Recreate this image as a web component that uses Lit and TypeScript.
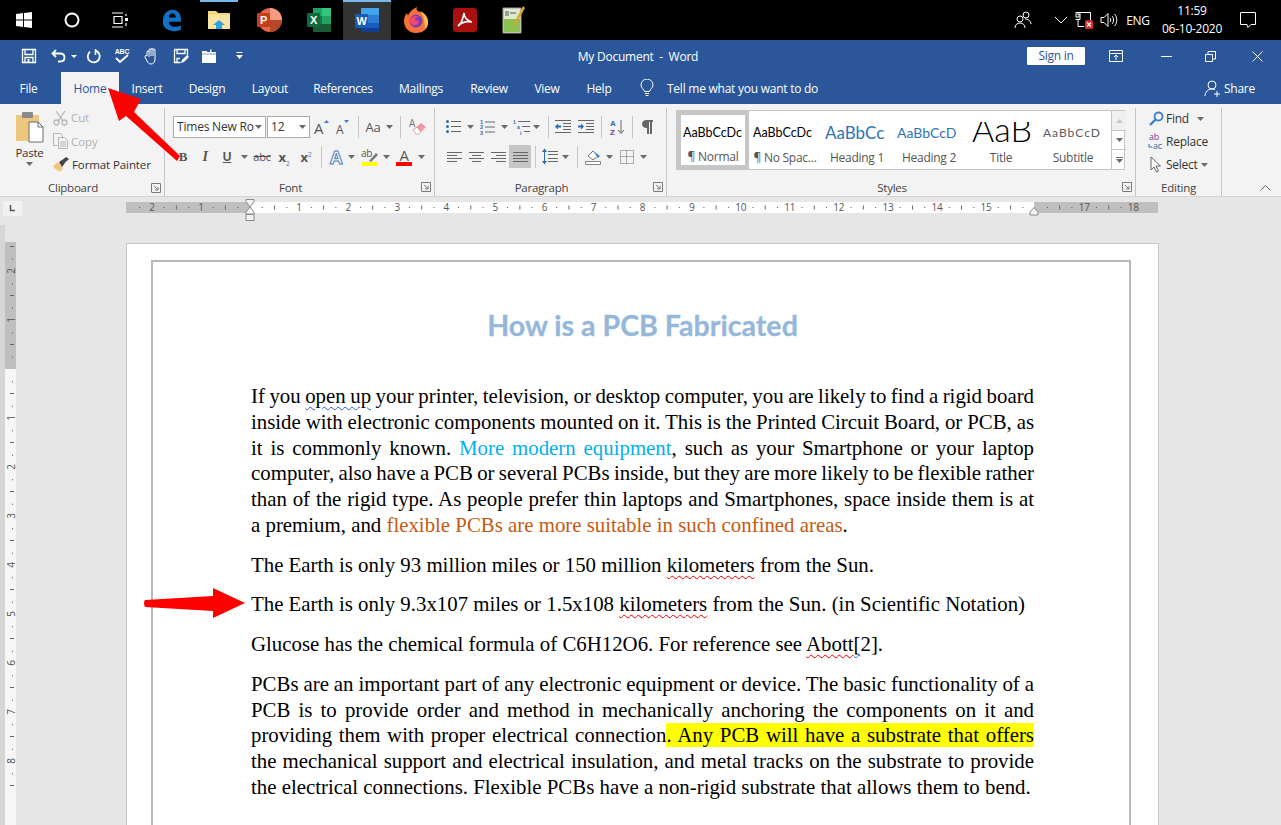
import { LitElement, html, css, svg } from "lit";
import { customElement } from "lit/decorators.js";

const arrow = html`<svg width="7" height="4" viewBox="0 0 7 4"><path d="M0 0h7L3.5 4z" fill="#6a6a6a"/></svg>`;
const launcher = html`<svg width="10" height="10" viewBox="0 0 10 10" fill="none" stroke="#7a7a7a"><path d="M.5 9V.5H9.5V9.5H.5"/><path d="M3 3l4 4M7 4v3H4"/></svg>`;

// taskbar icons
const tb = {
  start: html`<svg width="18" height="18" viewBox="0 0 18 18" fill="#fff"><path d="M1 3l7-1v6.500H1zM9 2l8-1v7.500H9zM1 9.500h7V16l-7-1zM9 9.500h8V17l-8-1z"/></svg>`,
  cortana: html`<svg width="18" height="18" viewBox="0 0 18 18" fill="none" stroke="#fff" stroke-width="2"><circle cx="9" cy="9" r="6.500"/></svg>`,
  task: html`<svg width="18" height="18" viewBox="0 0 18 18" fill="none" stroke="#fff" stroke-width="1.200"><path d="M1 2h11M3 5.500h8v7H3zM1 16h11"/><path d="M15 3v2M15 12v3"/><rect x="14" y="7" width="3" height="3" fill="#fff" stroke="none"/></svg>`,
  edge: html`<svg width="21" height="24" viewBox="0 0 24 28"><path d="M2 15C2 6 8 2 13 2c6 0 10 4 10 11v3H9c0 4 3 6 7 6 3 0 5-1 7-2v5c-2 1-5 2-8 2C7 27 1 22 2 15zM9 11h8c0-3-2-5-4-5-2 0-4 2-4 5z" fill="#0f72c6"/></svg>`,
  folder: html`<svg width="24" height="24" viewBox="0 0 24 24"><path d="M1 3h8l2 2h12v16H1z" fill="#f3d57f"/><path d="M1 7h22v14H1z" fill="#f7e3a3"/><path d="M6 17l6-5 6 5h-3v4H9v-4z" fill="#2ba5e0"/></svg>`,
  ppt: html`<svg width="26" height="26" viewBox="0 0 26 26"><circle cx="14" cy="13" r="12" fill="#e0694b"/><path d="M14 13V1a12 12 0 0 1 12 12z" fill="#f29b7f"/><path d="M14 13h12a12 12 0 0 1-12 12z" fill="#b7472a"/><rect x="1" y="6" width="13" height="14" rx="1" fill="#c43e1c"/><text x="7.500" y="17" font-size="11" font-weight="700" fill="#fff" text-anchor="middle" font-family="Liberation Sans">P</text></svg>`,
  excel: html`<svg width="24" height="26" viewBox="0 0 24 26"><path d="M6 1h18v24H6z" fill="#21a366"/><path d="M15 1h9v8h-9z" fill="#33c481"/><path d="M6 17h18v8H6z" fill="#185c37"/><path d="M6 9h9v8H6z" fill="#107c41"/><rect x="0" y="6" width="13" height="14" rx="1" fill="#0f6b39"/><text x="6.500" y="17" font-size="11" font-weight="700" fill="#fff" text-anchor="middle" font-family="Liberation Sans">X</text></svg>`,
  word: html`<svg width="24" height="26" viewBox="0 0 24 26"><path d="M6 1h18v7H6z" fill="#41a5ee"/><path d="M6 8h18v8H6z" fill="#2b7cd3"/><path d="M6 16h18v5H6z" fill="#185abd"/><path d="M6 21h18v4H6z" fill="#103f91"/><rect x="0" y="7" width="13" height="14" rx="1" fill="#185abd"/><text x="6.500" y="18" font-size="11" font-weight="700" fill="#fff" text-anchor="middle" font-family="Liberation Sans">W</text></svg>`,
  firefox: html`<svg width="26" height="28" viewBox="0 0 26 28"><path d="M13 27C5 27 1 21 1 15c0-3 1-6 3-8l1 3c1-4 5-7 9-9-1 3 0 4 3 5 4 2 8 5 8 11 0 6-5 10-12 10z" fill="#f7713a"/><path d="M17 5c4 2 8 5 8 11 0 3-1 5-3 7 0-6-1-13-5-18z" fill="#ffc73b"/><circle cx="13" cy="15" r="6.500" fill="#7a3bbd"/><path d="M7 13c2-3 6-4 9-2-3 0-4 1-4 3l4 1c0 3-3 5-6 4-2-1-4-3-3-6z" fill="#f04a6c"/></svg>`,
  acrobat: html`<svg width="24" height="24" viewBox="0 0 24 24"><rect width="24" height="24" rx="3" fill="#a80f0f"/><path d="M5 18c3-2 5-7 6-13 0 4 3 8 8 9-5-1-10 0-14 4z" fill="none" stroke="#fff" stroke-width="1.600"/></svg>`,
  notepad: html`<svg width="24" height="30" viewBox="0 0 24 30"><path d="M2 3h18v25H2z" fill="#dfe8d0" stroke="#9aa08f"/><path d="M3 14h16v13H3z" fill="#8cc152"/><path d="M5 6v5M7 6v5M9 8h6" stroke="#555"/><path d="M22 1L12 20l2 1L24 3z" fill="#d9a62e"/></svg>`,
  people: html`<svg width="20" height="20" viewBox="0 0 20 20" fill="none" stroke="#fff"><circle cx="7" cy="9" r="3"/><path d="M2 18c0-3 2-5 5-5s5 2 5 5"/><circle cx="13" cy="5" r="3"/><path d="M12 9c3 0 6 2 6 5"/></svg>`,
  chev: html`<svg width="14" height="8" viewBox="0 0 14 8" fill="none" stroke="#fff"><path d="M1 1l6 6 6-6"/></svg>`,
  net: html`<svg width="18" height="18" viewBox="0 0 18 18"><path d="M.5 1.500h15v11M5 1.500v7M.5 8.500H5M3 8.500v7h6" fill="none" stroke="#fff"/><rect x="1" y="3" width="3" height="3" fill="none" stroke="#fff"/><rect x="10" y="9" width="8" height="9" rx="1.500" fill="#e0262b"/><path d="M12 11.500l4 4M16 11.500l-4 4" stroke="#fff" stroke-width="1.300"/></svg>`,
  speaker: html`<svg width="18" height="16" viewBox="0 0 18 16" fill="none" stroke="#fff"><path d="M1 5.500h3l4-4v13l-4-4H1z"/><path d="M10 6c1 1 1 3 0 4M12 4c2 2 2 6 0 8M14.500 2c3 3 3 9 0 12"/></svg>`,
  notif: html`<svg width="18" height="18" viewBox="0 0 18 18" fill="none" stroke="#fff"><path d="M1.500 1.500h15v12h-4.500l-3 3-1-3h-6.500z"/></svg>`,
};

// title bar icons
const qat = {
  save: html`<svg width="16" height="16" viewBox="0 0 16 16" fill="none" stroke="#fff" stroke-width="1.300"><path d="M1.500 1.500h13v13h-13z"/><path d="M4 1.500v5h8v-5M4 14.500v-5h8v5"/><path d="M6.500 11h2v3h-2z" fill="#fff" stroke="none"/></svg>`,
  undo: html`<svg width="16" height="16" viewBox="0 0 16 16" fill="none" stroke="#fff" stroke-width="1.800"><path d="M5 2L1.500 5.500 5 9M2 5.500h7c6 0 6 8 0 8H7"/></svg>`,
  redo: html`<svg width="16" height="16" viewBox="0 0 16 16" fill="none" stroke="#fff" stroke-width="1.800"><path d="M9 2.500a6 6 0 1 1-5 1.200"/><path d="M9.500 1v6" stroke-width="1.500"/></svg>`,
  spell: html`<svg width="18" height="18" viewBox="0 0 18 18"><text x="9" y="6.500" font-size="7" font-weight="700" fill="#fff" text-anchor="middle" font-family="Liberation Sans">ABC</text><path d="M3 11l4 4 8-7" fill="none" stroke="#fff" stroke-width="1.800"/></svg>`,
  hand: html`<svg width="16" height="18" viewBox="0 0 16 18" fill="none" stroke="#fff"><path d="M3 9V5c0-1.500 2-1.500 2 0V3c0-1.500 2-1.500 2 0v-.5c0-1.500 2-1.500 2 0V3c0-1.500 2-1.500 2 0v9c0 3-1.500 5-4 5-2 0-3-1-4-3L1 10c-.5-1.500 1-2 2-1z"/><path d="M5 5v5M7 3v6M9 3v6"/></svg>`,
  saveas: html`<svg width="16" height="16" viewBox="0 0 16 16" fill="none" stroke="#fff" stroke-width="1.300"><path d="M1.500 1.500h13v6M1.500 1.500v13h6"/><path d="M4 1.500v4h8v-4M4 14.500v-4h3"/><path d="M8 15l1-3 5-5 2 2-5 5z" fill="#fff" stroke="none"/></svg>`,
  open: html`<svg width="16" height="16" viewBox="0 0 16 16"><path d="M1 3h5v1h3V1.500h1.500V4H15v11H1z" fill="#fff"/><path d="M1 6h14" stroke="#2b579a" stroke-width=".6"/></svg>`,
  custom: html`<svg width="7" height="8" viewBox="0 0 7 8" fill="#fff"><path d="M.5 0h6v1h-6zM0 3h7L3.500 7z"/></svg>`,
  ribbon: html`<svg width="14" height="12" viewBox="0 0 14 12" fill="none" stroke="#fff"><path d="M.5.500h13v11H.5zM.5 3.500h13"/><path d="M7 10V5M5 7l2-2 2 2"/></svg>`,
  min: html`<svg width="11" height="1"><path d="M0 .5h11" stroke="#fff"/></svg>`,
  max: html`<svg width="11" height="11" viewBox="0 0 11 11" fill="none" stroke="#fff"><path d="M.5 3.500h7v7h-7zM3 3.500V.5h7.500V8H8"/></svg>`,
  close: html`<svg width="11" height="11" viewBox="0 0 11 11" fill="none" stroke="#fff"><path d="M.5.5l10 10M10.500.5l-10 10"/></svg>`,
  bulb: html`<svg width="14" height="18" viewBox="0 0 14 18" fill="none" stroke="#fff"><path d="M4.500 12.500C4 10 1 9 1 6a6 6 0 0 1 12 0c0 3-3 4-3.500 6.500z"/><path d="M5 14.500h4M5.500 16.500h3"/></svg>`,
  share: html`<svg width="17" height="17" viewBox="0 0 17 17" fill="none" stroke="#fff"><circle cx="8" cy="5" r="4"/><path d="M1 16c0-4 3-7 7-7 1 0 2 .2 3 .6M13 11v6M10 14h6"/></svg>`,
};

// ribbon icons
const rb = {
  paste: html`<svg width="30" height="32" viewBox="0 0 30 32"><rect x="1" y="4" width="23" height="26" rx="1" fill="#eec77f"/><rect x="7" y="1" width="11" height="6" rx="1" fill="#8a8a8a"/><path d="M14 11h9l5 5v15H14z" fill="#fff" stroke="#6a6a6a"/><path d="M23 11v5h5" fill="none" stroke="#6a6a6a"/></svg>`,
  cut: html`<svg width="15" height="16" viewBox="0 0 15 16" fill="none" stroke="#b5b5b5" stroke-width="1.300"><circle cx="3.500" cy="12.500" r="2.500"/><circle cx="11.500" cy="12.500" r="2.500"/><path d="M3 1l7 10M12 1L5 11"/></svg>`,
  copy: html`<svg width="15" height="16" viewBox="0 0 15 16" fill="none" stroke="#b5b5b5"><path d="M.5.500h7l2 2v3M.5.500v12h4"/><path d="M5.500 4.500h6l3 3v8h-9z"/><path d="M7 9h6M7 11h6M7 13h6"/></svg>`,
  painter: html`<svg width="16" height="15" viewBox="0 0 16 15"><path d="M0 9l5-4 5 6-3 4-2-2-1 1-1-2-1 0z" fill="#eec77f"/><path d="M6 5l6-4 2 2-5 7z" fill="#444"/><path d="M11 2l2-2 3 2-2 2z" fill="#444"/></svg>`,
  grow: html`<svg width="18" height="16" viewBox="0 0 18 16"><text x="0" y="15" font-size="15" fill="#555" font-family="Open Sans">A</text><path d="M10 4l2.500-3L15 4z" fill="#4a7ebb"/></svg>`,
  shrink: html`<svg width="16" height="16" viewBox="0 0 16 16"><text x="0" y="15" font-size="12" fill="#555" font-family="Open Sans">A</text><path d="M8 1h5l-2.500 3z" fill="#4a7ebb"/></svg>`,
  eraser: html`<svg width="18" height="18" viewBox="0 0 18 18"><text x="0" y="9" font-size="10" fill="#777" font-family="Open Sans">A</text><path d="M4 12l8-7 5 4-7 7H7z" fill="#ee9aa0"/><path d="M4 12l3 4h3l2-2-4-5z" fill="#fff" stroke="#c77" stroke-width=".6"/></svg>`,
  effects: html`<svg width="18" height="16" viewBox="0 0 18 16"><text x="9" y="14.500" font-size="18" font-weight="700" text-anchor="middle" fill="#fff" stroke="#4a7ebb" stroke-width="1" font-family="Open Sans">A</text></svg>`,
  highlight: html`<svg width="18" height="18" viewBox="0 0 18 18"><text x="0" y="9" font-size="10" fill="#555" font-family="Open Sans">ab</text><path d="M8 13l7-8 2 2-7 7z" fill="#777"/><rect x="1" y="14" width="16" height="4" fill="#ff0"/></svg>`,
  fontcolor: html`<svg width="18" height="18" viewBox="0 0 18 18"><text x="9" y="13" font-size="15" text-anchor="middle" fill="#555" font-family="Open Sans">A</text><rect x="1" y="14" width="16" height="4" fill="#f00"/></svg>`,
  bullets: html`<svg width="15" height="15" viewBox="0 0 15 15"><path d="M5 2.500h10M5 7.500h10M5 12.500h10" stroke="#666"/><g fill="#2b6cb0"><circle cx="1.500" cy="2.500" r="1.500"/><circle cx="1.500" cy="7.500" r="1.500"/><circle cx="1.500" cy="12.500" r="1.500"/></g></svg>`,
  numbers: html`<svg width="15" height="16" viewBox="0 0 15 16"><path d="M5 3h10M5 8h10M5 13h10" stroke="#666"/><g font-size="5.500" fill="#2b6cb0" font-family="Liberation Sans" font-weight="700"><text x="0" y="5">1</text><text x="0" y="10">2</text><text x="0" y="15.500">3</text></g></svg>`,
  multi: html`<svg width="17" height="16" viewBox="0 0 17 16"><path d="M5 2.500h12M9 7.500h8M11 12.500h6" stroke="#666"/><g font-size="5" fill="#2b6cb0" font-family="Liberation Sans" font-weight="700"><text x="0" y="5">1</text><text x="4" y="10">a</text><text x="7" y="15.500">i</text></g></svg>`,
  outdent: html`<svg width="16" height="13" viewBox="0 0 16 13"><path d="M0 .5h16M8 3.500h8M8 6.500h8M8 9.500h8M0 12.500h16" stroke="#666"/><path d="M0 6.500l3-3v2h3v2H3v2z" fill="#2b6cb0"/></svg>`,
  indent: html`<svg width="16" height="13" viewBox="0 0 16 13"><path d="M0 .5h16M8 3.500h8M8 6.500h8M8 9.500h8M0 12.500h16" stroke="#666"/><path d="M6 6.500l-3-3v2H0v2h3v2z" fill="#2b6cb0"/></svg>`,
  sort: html`<svg width="15" height="16" viewBox="0 0 15 16"><text x="0" y="7" font-size="8" font-weight="700" fill="#2b6cb0" font-family="Liberation Sans">A</text><text x="0" y="15.500" font-size="8" font-weight="700" fill="#7c3aa5" font-family="Liberation Sans">Z</text><path d="M11 1v13M8 11l3 3.500 3-3.500" fill="none" stroke="#666"/></svg>`,
  pilcrow: html`<svg width="11" height="14" viewBox="0 0 11 14"><path d="M4.500 0H11v2h-1v12H8V2H7v12H5V8C1.500 8 0 6 0 4s1.500-4 4.500-4z" fill="#666"/></svg>`,
  spacing: html`<svg width="16" height="17" viewBox="0 0 16 17"><path d="M6 3.500h10M6 6.500h10M6 10.500h10M6 13.500h10" stroke="#666"/><path d="M2.500 2v13" stroke="#2b6cb0"/><path d="M0 4l2.500-3.500L5 4zM0 13l2.500 3.500L5 13z" fill="#2b6cb0"/></svg>`,
  shade: html`<svg width="17" height="16" viewBox="0 0 17 16"><path d="M3 7l5-5 5 5-5 4z" fill="#fff" stroke="#777"/><path d="M8 2l7 5-2 2" fill="#4a7ebb"/><path d="M.5 12.500h15v3H.5z" fill="#fff" stroke="#888"/></svg>`,
  borders: html`<svg width="14" height="14" viewBox="0 0 14 14" fill="none" stroke="#666" stroke-dasharray="1 1"><path d="M.5.500h13v13H.5zM.5 6.500h13M6.500 .5v13"/></svg>`,
  find: html`<svg width="15" height="15" viewBox="0 0 15 15" fill="none" stroke="#3c7fc4" stroke-width="1.800"><circle cx="9.500" cy="5.500" r="4"/><path d="M6.500 8.500L1 14" stroke-width="2.400"/></svg>`,
  replace: html`<svg width="17" height="17" viewBox="0 0 17 17" font-family="Open Sans" font-size="9"><text x="1" y="7" fill="#7c3aa5">ab</text><text x="5" y="16" fill="#2b6cb0">ac</text><path d="M1 11v3h3" fill="none" stroke="#2b6cb0"/></svg>`,
  select: html`<svg width="12" height="17" viewBox="0 0 12 17"><path d="M1 1v13l3-3 2.500 5 2-1L6 10h4.500z" fill="#fff" stroke="#666"/></svg>`,
};

// alignment buttons: four lines 3px apart, x/w for the short ones
function alignLines(x: number, w: number) {
  return html`<svg width="15" height="10" viewBox="0 0 15 10"><path d="M0 .5h15M${x} 3.500h${w}M0 6.500h15M${x} 9.500h${w}" stroke="#666"/></svg>`;
}

// horizontal ruler, 49 px per cm counted from the left margin
function hRuler() {
  const x0 = 250;
  const cm = 49.07;
  const marks = [];
  for (let i = -10; i <= 72; i++) {
    const x = x0 + (i * cm) / 4;
    if (x < 128 || x > 1156) continue;
    const n = i / 4;
    if (Number.isInteger(n)) {
      if (n === 0 || n === 16) continue;
      marks.push(svg`<text x=${x} y="12" text-anchor="middle">${Math.abs(n)}</text>`);
    } else if (i % 2 === 0) {
      marks.push(svg`<path d="M${x} 6.500v4" stroke="#666"/>`);
    } else {
      marks.push(svg`<rect x=${x - 0.5} y="8" width="1" height="1" fill="#555"/>`);
    }
  }
  return html`<svg class="hruler" width="1281" height="26" viewBox="0 0 1281 26" font-family="Open Sans" font-size="10" fill="#555">
    <rect x="126" y="3" width="1032" height="11" fill="#bfbfbf"/>
    <rect x="250" y="3" width="784" height="11" fill="#fff"/>
    ${marks}
    <rect x="3" y="2" width="19" height="15" fill="#f1f1f1"/>
    <path d="M10.500 6v5.500H15" fill="none" stroke="#555" stroke-width="1.500"/>
    <path d="M246 .5h8v2l-4 5.500-4-5.500z" fill="#f3f3f3" stroke="#8a8a8a"/>
    <path d="M250 8l4 5v2h-8v-2z" fill="#f3f3f3" stroke="#8a8a8a"/>
    <rect x="246" y="15.500" width="8" height="6" fill="#f3f3f3" stroke="#8a8a8a"/>
    <path d="M1034 8.500l4 4.500v3h-8v-3z" fill="#f3f3f3" stroke="#8a8a8a"/>
  </svg>`;
}

function vRuler() {
  const y0 = 144;
  const cm = 49;
  const marks = [];
  for (let i = -10; i <= 34; i++) {
    const y = y0 + (i * cm) / 4;
    if (y < 18) continue;
    const n = i / 4;
    if (Number.isInteger(n)) {
      if (n === 0) continue;
      marks.push(svg`<text transform="translate(15 ${y}) rotate(-90)" text-anchor="middle">${Math.abs(n)}</text>`);
    } else if (i % 2 === 0) {
      marks.push(svg`<path d="M10 ${y}h4" stroke="#666"/>`);
    } else {
      marks.push(svg`<rect x="12" y=${y} width="1" height="1" fill="#555"/>`);
    }
  }
  return html`<svg class="vruler" width="16" height="600" viewBox="0 0 16 600" font-family="Open Sans" font-size="10" fill="#555">
    <rect x="0" y="0" width="5" height="600" fill="#d6d6d6"/>
    <rect x="5" y="17" width="11" height="583" fill="#f6f6f6"/>
    <rect x="5" y="17" width="11" height="127" fill="#bfbfbf"/>
    ${marks}
  </svg>`;
}

@customElement("app-root")
export class AppRoot extends LitElement {
  static styles = css`
    :host {
      display: block;
      position: relative;
      width: 1281px;
      height: 825px;
      overflow: hidden;
      background: #e6e6e6;
      font-family: "Open Sans", "Noto Sans", sans-serif;
      font-size: 11.5px;
      letter-spacing: -0.25px;
      color: #444;
    }
    svg { display: block; flex: none; }

    /* taskbar */
    .taskbar { display: flex; height: 40px; background: #000; color: #fff; }
    .tb-cell { position: relative; width: 48px; display: flex; align-items: center; justify-content: center; }
    .tb-cell.open::before { content: ""; position: absolute; top: 0; left: 5px; right: 5px; height: 2px; background: #76b9ed; }
    .tb-cell.current { background: #333; }
    .tb-cell.current::before { left: 0; right: 0; }
    .m1 { margin-left: 1px; }
    .m2 { margin-left: 2px; }
    .m3 { margin-left: 3px; }
    .m5 { margin-left: 5px; }
    .tray {
      margin-left: auto;
      display: grid;
      grid-template-columns: 26px 14px 22px 2px 20px 3px 23px 3px 30px 8px 62px 8px 34px;
      width: 271px;
      align-items: center;
      justify-items: center;
      font-size: 12px;
    }
    .t1 { grid-column: 1; }
    .t2 { grid-column: 3; }
    .t3 { grid-column: 5; }
    .t4 { grid-column: 7; }
    .t5 { grid-column: 9; }
    .t6 { grid-column: 11; text-align: center; line-height: 18px; white-space: nowrap; }
    .t7 { grid-column: 13; }

    /* title bar */
    .titlebar { position: relative; display: flex; align-items: center; height: 32px; background: #2b579a; color: #fff; }
    .qat { display: flex; padding-left: 15px; }
    .qat > div { width: 28px; height: 24px; display: flex; align-items: center; justify-content: center; }
    .qat > .w22 { width: 22px; }
    .qat > .w8 { width: 8px; }
    .doc-title { position: absolute; left: 0; width: 1276px; text-align: center; pointer-events: none; white-space: pre; font-size: 12px; }
    .win { margin-left: auto; display: flex; align-items: center; padding-right: 18.5px; }
    .signin { width: 58px; height: 18px; background: #fff; color: #2b579a; text-align: center; line-height: 18px; border-radius: 1px; font-size: 12px; }
    .win svg:nth-child(2) { margin-left: 24px; }
    .win svg:nth-child(3) { margin-left: 37.5px; }
    .win svg:nth-child(4) { margin-left: 33px; }
    .win svg:nth-child(5) { margin-left: 36px; }

    /* tabs */
    .tabs {
      display: grid;
      grid-template-columns: 61px 58px 56px 64px 62px 84px 72px 64px 52px 52px 12px 20px auto 1fr auto;
      height: 32px;
      align-items: center;
      justify-items: center;
      background: #2b579a;
      color: #fff;
      font-size: 12px;
    }
    .tab { height: 32px; line-height: 33px; white-space: nowrap; }
    .tab:first-child { margin-right: 4px; }
    .tab.on { width: 100%; background: #f3f3f3; color: #2b579a; text-align: center; }
    .bulb { grid-column: 12; }
    .tell { padding-left: 10px; justify-self: start; white-space: nowrap; }
    .share { grid-column: 15; display: flex; align-items: center; gap: 3px; padding-right: 26px; }

    /* ribbon */
    .ribbon { position: relative; display: flex; height: 92px; background: #f3f3f3; border-bottom: 1px solid #d4d4d4; }
    .group { display: grid; grid-template-rows: 1fr 20px; position: relative; height: 88px; margin-top: 4px; box-sizing: border-box; border-right: 1px solid #c6c6c6; }
    .g-clip { width: 165px; }
    .g-font { width: 270px; }
    .g-para { width: 232px; }
    .g-style { width: 469px; }
    .g-edit { width: 86px; }
    .g-foot { display: grid; grid-template-columns: 1fr 18px; align-items: center; justify-items: center; margin-top: 2px; height: 18px; }
    .g-foot.plain { grid-template-columns: 1fr; }
    .g-foot > span { white-space: nowrap; }
    .g-foot > svg { justify-self: end; margin-right: 3px; }

    .clip { display: flex; padding-left: 14px; }
    .paste { width: 31px; display: flex; flex-direction: column; align-items: center; padding-top: 3px; gap: 2px; color: #333; }
    .clip-list { display: grid; grid-auto-rows: 23.5px; margin: -2px 0 0 8px; }
    .clip-row { display: flex; align-items: center; gap: 3px; white-space: nowrap; color: #333; letter-spacing: -0.1px; }
    .clip-row.off { color: #b0b0b0; }

    .tools { padding-top: 7px; display: grid; grid-auto-rows: 23px; row-gap: 7px; }
    .row { display: grid; align-items: center; justify-items: center; height: 23px; }
    .sep { width: 1px; height: 22px; background: #c6c6c6; }
    .font-r1 { margin-left: 8px; grid-template-columns: 93px 1px 43px 2px 21px 22px 6px 24px 8px 14px 21px; }
    .font-r2 { margin-left: 7px; grid-template-columns: 22px 22px 22px 13px 22px 22px 22px 8px 22px 9px 2px 24px 9px 26px 8px; }
    .combo { width: 100%; height: 22px; box-sizing: border-box; background: #fff; border: 1px solid #ababab; display: flex; align-items: center; justify-content: space-between; padding: 0 3px; font-size: 12px; color: #333; white-space: nowrap; overflow: hidden; letter-spacing: -0.2px; }
    .combo span { overflow: hidden; }
    .b { font-family: "Liberation Serif", serif; font-weight: 700; font-size: 13px; color: #555; }
    .i { font-family: "Liberation Serif", serif; font-style: italic; font-weight: 700; font-size: 14px; color: #555; }
    .u { font-family: "Liberation Sans", sans-serif; text-decoration: underline; font-weight: 700; font-size: 12px; color: #555; }
    .abc { text-decoration: line-through; font-size: 11px; color: #555; }
    .sx { font-weight: 700; font-size: 13px; color: #555; }
    .sx sub, .sx sup { font-size: 7px; color: #4a7ebb; font-weight: 400; line-height: 0; }
    .aa { font-size: 13px; color: #555; }

    .para-r1 { margin-left: 8px; grid-template-columns: 20px 14px 20px 14px 20px 10px 7px 1px 3px 22px 24px 3px 1px 30px 1px 28px; }
    .para-r2 { margin-left: 8px; grid-template-columns: 22px 22px 22px 22px 4px 1px 2px 24px 6px 9px 1px 4px 22px 10px 26px 6px; }
    .pressed { background: #c6c6c6; height: 23px; width: 22px; display: flex; align-items: center; justify-content: center; }

    .gallery { position: relative; display: flex; width: 449px; height: 60px; margin: 2px 0 0 9px; box-sizing: border-box; background: #fff; border: 1px solid #c6c6c6; }
    .style { width: 72px; height: 58px; box-sizing: border-box; padding: 4px 4px 0; display: flex; flex-direction: column; overflow: hidden; flex: none; text-align: center; }
    .style.sel { border: 4px solid #c6c6c6; padding: 0; }
    .sample { height: 31px; line-height: 35px; overflow: hidden; white-space: nowrap; font-family: Lato, "Open Sans", sans-serif; letter-spacing: 0; font-size: 12.500px; color: #000; text-align: left; }
    .sel .sample { padding-left: 2px; }
    .cap { height: 20px; line-height: 23px; white-space: nowrap; color: #555; font-size: 12px; }
    .s-h1 { font-size: 17px; color: #2e74b5; }
    .s-h2 { font-size: 14px; color: #2e74b5; }
    .s-title { font-size: 34px; font-weight: 300; height: 24px; margin-top: 7px; line-height: 14px; padding-left: 3px; }
    .s-sub { font-size: 12px; letter-spacing: 1px; color: #5a5a5a; padding-left: 2px; }
    .scroll { display: grid; grid-template-rows: 20px 19px 19px; width: 14px; margin-left: 2px; border-left: 1px solid #c6c6c6; flex: none; }
    .scroll div { display: flex; align-items: center; justify-content: center; flex-direction: column; gap: 1px; border-bottom: 1px solid #c6c6c6; }
    .scroll div:last-child { border-bottom: 0; }
    .scroll .dis { background: #f0f0f0; }
    .bar { width: 7px; height: 1px; background: #6a6a6a; }

    .edit-list { display: grid; grid-auto-rows: 23px; margin-top: -1px; padding-left: 10px; }
    .edit-row { display: flex; align-items: center; color: #333; font-size: 12px; white-space: nowrap; }
    .edit-ic { width: 20px; flex: none; display: flex; justify-content: center; }
    .edit-row > svg { margin-left: 8px; }
    .tight { margin-left: 3px; }
    .collapse { margin: 81px 0 0 38px; }

    /* document */
    .rulerband { height: 28px; box-sizing: border-box; padding-top: 2px; background: #e6e6e6; }
    .main { display: flex; height: 600px; }
    .work { flex: 1; padding: 18px 0 0 110px; }
    .page { width: 1033px; height: 700px; box-sizing: border-box; background: #fff; border: 1px solid #c6c6c6; padding: 16px 27px 0 24px; }
    .frame { height: 680px; border: 2px solid #b8b8b8; border-bottom: 0; padding: 43px 95px 0 98px; font-family: "Liberation Serif", "Times New Roman", serif; font-size: 20.85px; line-height: 25.8px; color: #000; letter-spacing: 0; }
    h1 { margin: 0 0 39px; height: 40px; line-height: 40px; text-align: center; font-family: Lato, "Open Sans", sans-serif; font-weight: 700; font-size: 28.6px; color: #95b8da; -webkit-text-stroke: 0.3px #95b8da; }
    p { margin: 0 0 13.9px; }
    /* the reference breaks its justified lines at fixed words */
    .ln { display: block; text-align: justify; text-align-last: justify; }
    .ln.narrow { word-spacing: -1.2px; }
    .blue { color: #00b0f0; }
    .orange { color: #c55a11; }
    .hl { background: #ff0; }
    .sq-r { text-decoration: underline wavy #e00 1px; text-underline-offset: 3px; }
    .sq-b { text-decoration: underline wavy #2a5bd7 1px; text-underline-offset: 3px; }

    .marks { position: absolute; inset: 0; pointer-events: none; }
  `;

  renderTaskbar() {
    return html`<div class="taskbar">
      <div class="tb-cell">${tb.start}</div>
      <div class="tb-cell">${tb.cortana}</div>
      <div class="tb-cell">${tb.task}</div>
      <div class="tb-cell m3">${tb.edge}</div>
      <div class="tb-cell open">${tb.folder}</div>
      <div class="tb-cell m2">${tb.ppt}</div>
      <div class="tb-cell m2">${tb.excel}</div>
      <div class="tb-cell open current">${tb.word}</div>
      <div class="tb-cell m1">${tb.firefox}</div>
      <div class="tb-cell m1">${tb.acrobat}</div>
      <div class="tb-cell">${tb.notepad}</div>
      <div class="tray">
        <div class="t1">${tb.people}</div>
        <div class="t2">${tb.chev}</div>
        <div class="t3">${tb.net}</div>
        <div class="t4">${tb.speaker}</div>
        <div class="t5">ENG</div>
        <div class="t6">11:59<br />06-10-2020</div>
        <div class="t7">${tb.notif}</div>
      </div>
    </div>`;
  }

  renderTitlebar() {
    return html`<div class="titlebar">
      <div class="qat">
        <div>${qat.save}</div>
        <div class="w22 m5">${qat.undo}</div>
        <div class="w8"><svg width="6" height="3" viewBox="0 0 6 3"><path d="M0 0h6L3 3z" fill="#fff"/></svg></div>
        <div class="m2">${qat.redo}</div>
        <div>${qat.spell}</div>
        <div class="m2">${qat.hand}</div>
        <div class="m1">${qat.saveas}</div>
        <div>${qat.open}</div>
        <div class="m2">${qat.custom}</div>
      </div>
      <div class="doc-title">My Document  -  Word</div>
      <div class="win">
        <div class="signin">Sign in</div>
        ${qat.ribbon}${qat.min}${qat.max}${qat.close}
      </div>
    </div>`;
  }

  renderTabs() {
    const names = ["File", "Home", "Insert", "Design", "Layout", "References", "Mailings", "Review", "View", "Help"];
    return html`<div class="tabs">
      ${names.map((n) => html`<div class="tab ${n === "Home" ? "on" : ""}">${n}</div>`)}
      <div class="bulb">${qat.bulb}</div>
      <div class="tell">Tell me what you want to do</div>
      <div class="share">${qat.share}Share</div>
    </div>`;
  }

  renderFoot(label: string, hasLauncher = true) {
    return html`<div class="g-foot ${hasLauncher ? "" : "plain"}"><span>${label}</span>${hasLauncher ? launcher : ""}</div>`;
  }

  renderClipboard() {
    return html`<div class="group g-clip">
      <div class="clip">
        <div class="paste">${rb.paste}<span>Paste</span>${arrow}</div>
        <div class="clip-list">
          <div class="clip-row off">${rb.cut}Cut</div>
          <div class="clip-row off">${rb.copy}Copy</div>
          <div class="clip-row">${rb.painter}Format Painter</div>
        </div>
      </div>
      ${this.renderFoot("Clipboard")}
    </div>`;
  }

  renderFont() {
    return html`<div class="group g-font">
      <div class="tools">
        <div class="row font-r1">
          <div class="combo"><span>Times New Ro</span>${arrow}</div>
          <i></i>
          <div class="combo">12${arrow}</div>
          <i></i>
          ${rb.grow}${rb.shrink}
          <div class="sep"></div>
          <div class="aa">Aa</div>
          ${arrow}
          <div class="sep"></div>
          ${rb.eraser}
        </div>
        <div class="row font-r2">
          <div class="b">B</div>
          <div class="i">I</div>
          <div class="u">U</div>
          ${arrow}
          <div class="abc">abc</div>
          <div class="sx">x<sub>2</sub></div>
          <div class="sx">x<sup>2</sup></div>
          <div class="sep"></div>
          ${rb.effects}${arrow}
          <i></i>
          ${rb.highlight}${arrow}
          ${rb.fontcolor}${arrow}
        </div>
      </div>
      ${this.renderFoot("Font")}
    </div>`;
  }

  renderParagraph() {
    return html`<div class="group g-para">
      <div class="tools">
        <div class="row para-r1">
          ${rb.bullets}${arrow}${rb.numbers}${arrow}${rb.multi}${arrow}
          <i></i>
          <div class="sep"></div>
          <i></i>
          ${rb.outdent}${rb.indent}
          <i></i>
          <div class="sep"></div>
          ${rb.sort}
          <div class="sep"></div>
          ${rb.pilcrow}
        </div>
        <div class="row para-r2">
          ${alignLines(0, 10)}
          ${alignLines(3, 9)}
          ${alignLines(5, 10)}
          <div class="pressed">${alignLines(0, 15)}</div>
          <i></i>
          <div class="sep"></div>
          <i></i>
          ${rb.spacing}${arrow}
          <i></i>
          <div class="sep"></div>
          <i></i>
          ${rb.shade}${arrow}${rb.borders}${arrow}
        </div>
      </div>
      ${this.renderFoot("Paragraph")}
    </div>`;
  }

  renderStyles() {
    return html`<div class="group g-style">
      <div>
        <div class="gallery">
          <div class="style sel"><div class="sample">AaBbCcDc</div><div class="cap">¶ Normal</div></div>
          <div class="style"><div class="sample">AaBbCcDc</div><div class="cap">¶ No Spac...</div></div>
          <div class="style"><div class="sample s-h1">AaBbCc</div><div class="cap">Heading 1</div></div>
          <div class="style"><div class="sample s-h2">AaBbCcD</div><div class="cap">Heading 2</div></div>
          <div class="style"><div class="sample s-title">AaB</div><div class="cap">Title</div></div>
          <div class="style"><div class="sample s-sub">AaBbCcD</div><div class="cap">Subtitle</div></div>
          <div class="scroll">
            <div class="dis"><svg width="7" height="4" viewBox="0 0 7 4"><path d="M0 4h7L3.500 0z" fill="#c6c6c6"/></svg></div>
            <div>${arrow}</div>
            <div><i class="bar"></i>${arrow}</div>
          </div>
        </div>
      </div>
      ${this.renderFoot("Styles")}
    </div>`;
  }

  renderEditing() {
    return html`<div class="group g-edit">
      <div class="edit-list">
        <div class="edit-row"><span class="edit-ic">${rb.find}</span>Find${arrow}</div>
        <div class="edit-row"><span class="edit-ic">${rb.replace}</span>Replace</div>
        <div class="edit-row"><span class="edit-ic">${rb.select}</span>Select<span class="tight">${arrow}</span></div>
      </div>
      ${this.renderFoot("Editing", false)}
    </div>`;
  }

  renderPage() {
    return html`<div class="page">
      <div class="frame">
        <h1>How is a PCB Fabricated</h1>
        <p>
          <span class="ln narrow">If you <span class="sq-b">open up</span> your printer, television, or desktop computer, you are likely to find a rigid board</span>
          <span class="ln narrow">inside with electronic components mounted on it. This is the Printed Circuit Board, or PCB, as</span>
          <span class="ln">it is commonly known. <span class="blue">More modern equipment</span>, such as your Smartphone or your laptop</span>
          <span class="ln narrow">computer, also have a PCB or several PCBs inside, but they are more likely to be flexible rather</span>
          <span class="ln">than of the rigid type. As people prefer thin laptops and Smartphones, space inside them is at</span>
          a premium, and <span class="orange">flexible PCBs are more suitable in such confined areas</span>.
        </p>
        <p>The Earth is only 93 million miles or 150 million <span class="sq-r">kilometers</span> from the Sun.</p>
        <p>The Earth is only 9.3x107 miles or 1.5x108 <span class="sq-r">kilometers</span> from the Sun. (in Scientific Notation)</p>
        <p>Glucose has the chemical formula of C6H12O6. For reference see <span class="sq-r">Abott</span><span class="sq-b">[</span>2].</p>
        <p>
          <span class="ln narrow">PCBs are an important part of any electronic equipment or device. The basic functionality of a</span>
          <span class="ln">PCB is to provide order and method in mechanically anchoring the components on it and</span>
          <span class="ln">providing them with proper electrical connection<span class="hl">. Any PCB will have a substrate that offers</span></span>
          <span class="ln">the mechanical support and electrical insulation, and metal tracks on the substrate to provide</span>
          the electrical connections. Flexible PCBs have a non-rigid substrate that allows them to bend.
        </p>
      </div>
    </div>`;
  }

  render() {
    return html`
      ${this.renderTaskbar()}
      ${this.renderTitlebar()}
      ${this.renderTabs()}
      <div class="ribbon">
        ${this.renderClipboard()}
        ${this.renderFont()}
        ${this.renderParagraph()}
        ${this.renderStyles()}
        ${this.renderEditing()}
        <svg class="collapse" width="11" height="6" viewBox="0 0 11 6" fill="none" stroke="#666"><path d="M.5 5.500l5-5 5 5"/></svg>
      </div>
      <div class="rulerband">${hRuler()}</div>
      <div class="main">
        ${vRuler()}
        <div class="work">${this.renderPage()}</div>
      </div>
      <svg class="marks" width="1281" height="825" viewBox="0 0 1281 825">
        <path d="M108 88L141 99 134 112 180 156 177 161 126 116 119 121z" fill="#f00"/>
        <path d="M145 600L213 596V588L245 603 213 618V611L145 607Q143 603 145 600z" fill="#f00"/>
      </svg>
    `;
  }
}
